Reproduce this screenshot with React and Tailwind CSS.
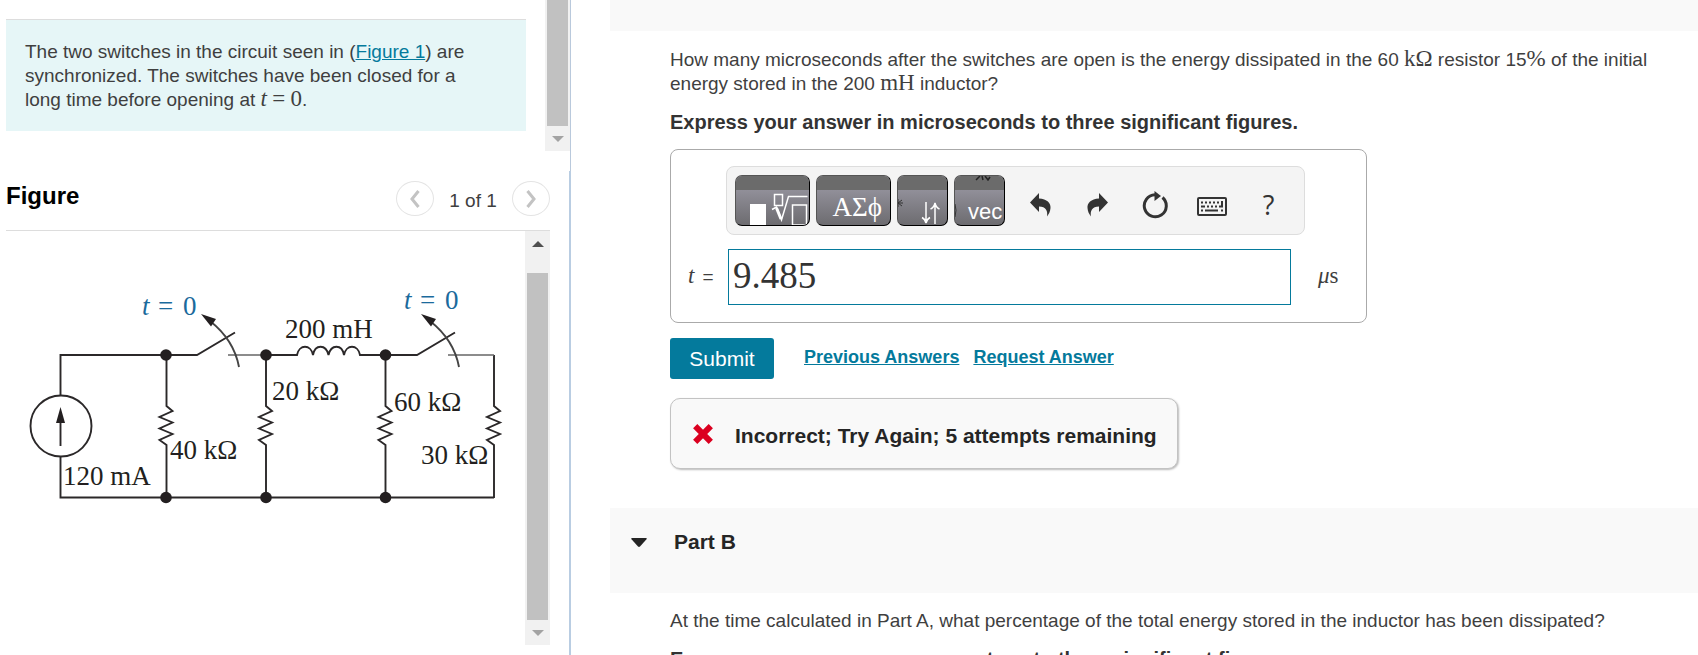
import { useState } from 'react';
import clsx from 'clsx';

// Inline math set in a serif face
const Formula = ({ children, italic = false }) => (
  <span className={clsx("font-['Liberation_Serif',serif] text-[23px] leading-4", italic && 'italic')}>
    {children}
  </span>
);

const Arrow = ({ up = false, dim = false }) => (
  <svg width="12" height="6" viewBox="0 0 12 6" fill={dim ? '#a3a3a3' : '#505050'}>
    <path d={up ? 'M0 6L6 0l6 6z' : 'M0 0h12L6 6z'} />
  </svg>
);

const PagerButton = ({ label, d }) => (
  <button
    aria-label={label}
    className="flex h-[35px] w-[38px] items-center justify-center rounded-[50%] border border-[#e4e4e4]"
  >
    <svg width="12" height="18" viewBox="0 0 12 18" fill="none" stroke="#c3c3c3" strokeWidth="3">
      <path d={d} />
    </svg>
  </button>
);

// Vertical branch with the zigzag between y=406 and y=445
const Resistor = ({ x }) => (
  <path d={`M${x} 355V406l6 5-13 6 13 5.500-13 6 13 5.500-13 6 7 5V498`} />
);

const Switch = ({ x, end }) => (
  <g>
    <path d={`M${x - 31} 355H${x}L${x + 38} 332.500`} />
    <path d={`M${x + 31} 355H${end}`} stroke="#666" strokeWidth="1.500" />
    <path d={`M${x + 42} 367Q${x + 37} 340 ${x + 13} 321`} stroke="#444" />
    <path d={`M${x + 4} 314l15 5-5 7.500z`} fill="#231f20" stroke="none" />
  </g>
);

const SwitchTime = ({ x, y }) => (
  <text y={y}>
    <tspan x={x} fontStyle="italic">t</tspan>
    <tspan x={x + 16}>=</tspan>
    <tspan x={x + 41}>0</tspan>
  </text>
);

const labels = [
  { x: 285, y: 338, text: '200 mH' },
  { x: 272, y: 400, text: '20 kΩ' },
  { x: 394, y: 411, text: '60 kΩ' },
  { x: 170, y: 459, text: '40 kΩ' },
  { x: 421, y: 464, text: '30 kΩ' },
  { x: 63, y: 485, text: '120 mA' }
];

const Circuit = () => (
  <svg
    width="519"
    height="300"
    viewBox="6 231 519 300"
    className="shrink-0 font-['Liberation_Serif',serif] text-[27px]"
    role="img"
    aria-label="Circuit"
  >
    <g fill="none" stroke="#2b2829" strokeWidth="1.900" strokeLinejoin="miter">
      <path d="M166 355H60.500V395.500M60.500 456.500V497.500H494" />
      <circle cx="61" cy="426" r="30.500" />
      <path d="M60.500 446V420" />
      <path d="M60.500 407l-4.500 16h9z" fill="#231f20" stroke="none" />
      <Resistor x={166.5} />
      <Resistor x={266} />
      <Resistor x={385.5} />
      <Resistor x={494} />
      <Switch x={197} end={266} />
      <Switch x={417} end={494} />
      <path d="M266 355H297C299 344 311 344 313 355C315 344 326 344 328.500 355C331 344 342 344 344 355C346 344 358 344 360 355H386" />
    </g>
    <g fill="#231f20">
      {[166, 266, 385.5].map((x) => (
        <g key={x}>
          <circle cx={x} cy="355" r="5.800" />
          <circle cx={x} cy="497.500" r="5.800" />
        </g>
      ))}
      {labels.map((l) => (
        <text key={l.text} x={l.x} y={l.y}>{l.text}</text>
      ))}
    </g>
    <g fill="#1b6a9c">
      <SwitchTime x={142} y={315} />
      <SwitchTime x={404} y={309} />
    </g>
  </svg>
);

const Problem = () => (
  <section className="flex h-[171px] border-r border-[#b9c9dc] pl-1.5">
    <div className="flex-1 pt-[19px]">
      <div className="mr-[19px] h-28 border-t border-[#ddd] bg-[#e6f6f7] pl-[19px] pr-10 pt-5">
        <p>
          The two switches in the circuit seen in (
          <a href="#figure" className="text-[#047a9c] underline">Figure 1</a>) are
          synchronized. The switches have been closed for a long time before opening at{' '}
          <Formula italic>t</Formula> <Formula>=</Formula> <Formula>0</Formula>.
        </p>
      </div>
    </div>
    <div className="flex h-[151px] w-[25px] flex-col items-center bg-[#f1f1f1]">
      <div className="w-[21px] flex-1 bg-[#c1c1c1]" />
      <div className="flex h-[25px] items-center"><Arrow dim /></div>
    </div>
  </section>
);

const Figure = () => (
  <section id="figure" className="flex flex-1 flex-col border-r-2 border-[#b9cde2] pl-1.5 pr-[19px]">
    <header className="flex h-[60px] shrink-0 items-center justify-between border-b border-[#ddd]">
      <h2 className="pb-2.5 text-[24px] font-bold text-black">Figure</h2>
      <div className="flex items-center pb-1">
        <PagerButton label="Previous" d="M9.500 1L3 9l6.500 8" />
        <span className="w-[78px] pt-1 text-center">1 of 1</span>
        <PagerButton label="Next" d="M2.500 1L9 9l-6.500 8" />
      </div>
    </header>
    <div className="mb-2.5 flex flex-1">
      <div className="flex-1"><Circuit /></div>
      <div className="flex w-[25px] flex-col items-center bg-[#f1f1f1]">
        <div className="flex h-[42px] items-start pt-2.5"><Arrow up /></div>
        <div className="w-[21px] flex-1 bg-[#c1c1c1]" />
        <div className="flex h-[25px] items-center"><Arrow dim /></div>
      </div>
    </div>
  </section>
);

const PaletteButton = ({ label, wide = false, children }) => (
  <button
    aria-label={label}
    className={clsx(
      'relative h-[51px] overflow-hidden rounded-[7px] border border-b-black border-l-[#555] border-r-black border-t-[#555] bg-linear-to-b from-[#a09eaa] to-[#6d6c70] text-white',
      wide ? 'w-[75px]' : 'w-[51px]'
    )}
  >
    <span className="absolute inset-x-0 top-0 h-3.5 bg-[#6b6b6b]" />
    {children}
  </button>
);

const IconButton = ({ label, children }) => (
  <button aria-label={label} className="flex w-[57px] items-center justify-center text-[#333]">
    {children}
  </button>
);

const Toolbar = () => (
  <div className="flex h-[69px] items-center rounded-lg border border-[#ddd] bg-[#f4f4f4] pl-2">
    <div className="flex gap-1.5">
      <PaletteButton label="Templates" wide>
        <svg className="absolute left-3.5 top-4" width="60" height="35" viewBox="0 0 60 35" fill="none" stroke="#fff">
          <path d="M0 12h16v21H0z" fill="#fff" stroke="none" />
          <path d="M24.500 2.500h8v11h-8z" strokeWidth="1.500" />
          <path d="M22 17.500l4.500-2.500 5 13 7-23.500h19" strokeWidth="1.500" />
          <path d="M26.500 16l4.500 11" strokeWidth="3" />
          <path d="M42.500 13h14v20h-14z" strokeWidth="1.500" />
        </svg>
      </PaletteButton>
      <PaletteButton label="Symbols" wide>
        <span className="absolute bottom-0.5 right-2 font-['Liberation_Serif',serif] text-[27px] leading-8">ΑΣϕ</span>
      </PaletteButton>
      <PaletteButton label="Scripts">
        <svg className="absolute left-0 top-[22px]" width="5" height="10" viewBox="0 0 5 10" fill="none" stroke="#333">
          <path d="M0 1v8M0 5l4-3M0 5l4 3M0 5h5" />
        </svg>
        <svg className="absolute left-[23px] top-[26px]" width="20" height="23" viewBox="0 0 20 23" fill="none" stroke="#fff" strokeWidth="1.500">
          <path d="M5 0v21M1 15.500q3 1.500 4 5.500 1-4 4-5.500M14 22V1M9.500 7q3.500-1.500 4.500-6 1 4.500 4.500 6" />
        </svg>
      </PaletteButton>
      <PaletteButton label="Vectors">
        <svg className="absolute left-5 top-0" width="16" height="5" viewBox="0 0 16 5" fill="none" stroke="#222" strokeWidth="1.500">
          <path d="M1 4l4-4M7 0l1 4M10 0l3 4 2-3" />
        </svg>
        <svg className="absolute left-0 top-7" width="3" height="13" viewBox="0 0 3 13" fill="none" stroke="#333">
          <path d="M0 0q2 6 0 13" />
        </svg>
        <span className="absolute left-[13px] top-6 text-[22px] leading-6">vec</span>
      </PaletteButton>
    </div>
    <div className="flex pl-[7px] pt-2">
      <IconButton label="Undo">
        <svg width="21" height="24" viewBox="0 0 21 24" fill="currentColor">
          <path d="M9 0v5.500C17 6 21 10 20.500 15c-.3 3.500-1.500 6-3.500 8.500C18 18 16 13.500 9 13.500V19L0 9.500z" />
        </svg>
      </IconButton>
      <IconButton label="Redo">
        <svg width="21" height="24" viewBox="0 0 21 24" fill="currentColor">
          <path d="M12 0v5.500C4 6 0 10 .5 15c.3 3.500 1.500 6 3.500 8.500C3 18 5 13.500 12 13.500V19L21 9.500z" />
        </svg>
      </IconButton>
      <IconButton label="Reset">
        <svg width="26" height="28" viewBox="0 0 26 28" fill="none">
          <path d="M20.500 6.500A11 11 0 1 1 13 3.800" stroke="currentColor" strokeWidth="3" />
          <path d="M12.500 0l6.500 5-6.500 5z" fill="currentColor" />
        </svg>
      </IconButton>
      <IconButton label="Keyboard">
        <svg width="30" height="19" viewBox="0 0 30 19" className="mt-1" fill="none" stroke="currentColor">
          <rect x="1" y="1" width="28" height="17" rx="1" strokeWidth="2" />
          <path d="M4 5.500h18" strokeWidth="2" strokeDasharray="2 2" />
          <path d="M4 9.500h4M10 9.500h2M14 9.500h2M18 9.500h2M22 9.500h4M25 4v6.500M4 13.500h2M8 13.500h13M24 13.500h2" strokeWidth="2" />
        </svg>
      </IconButton>
      <button aria-label="Help" className="w-[57px] text-center font-['Open_Sans',sans-serif] text-[27px] leading-none text-[#333]">?</button>
    </div>
  </div>
);

const AnswerBox = () => {
  const [value, setValue] = useState('9.485');

  return (
    <div className="mt-[15px] flex h-[174px] w-[697px] flex-col rounded-lg border border-[#aaa] pl-[17px] pt-4">
      <div className="ml-[38px] w-[579px]"><Toolbar /></div>
      <div className="mt-3.5 flex items-center">
        <label htmlFor="answer" className="flex w-[40px] items-baseline gap-2">
          <Formula italic>t</Formula>=
        </label>
        <input
          id="answer"
          value={value}
          onChange={(e) => setValue(e.target.value)}
          className="h-[56px] w-[563px] border border-[#047a9c] pb-1 pl-1 font-['Liberation_Serif',serif] text-[37px] text-[#333] outline-none"
        />
        <span className="pl-[27px]"><Formula italic>μ</Formula><Formula>s</Formula></span>
      </div>
    </div>
  );
};

const PartA = () => (
  <section className="pl-[60px] pr-4 pt-[17px]">
    <p>
      How many microseconds after the switches are open is the energy dissipated in the 60{' '}
      <Formula>kΩ</Formula> resistor 15<Formula>%</Formula> of the initial energy stored in the 200{' '}
      <Formula>mH</Formula> inductor?
    </p>
    <p className="mt-3.5 text-[20px] font-bold text-[#333]">
      Express your answer in microseconds to three significant figures.
    </p>
    <AnswerBox />
    <div className="mt-[15px] flex items-center">
      <button className="h-[41px] w-[104px] rounded-[3px] bg-[#047a9c] text-[21px] text-white">Submit</button>
      <div className="flex gap-3.5 pb-1 pl-[30px] text-[18px] font-bold text-[#047a9c]">
        <a href="#previous" className="underline">Previous Answers</a>
        <a href="#request" className="underline">Request Answer</a>
      </div>
    </div>
    <div
      role="alert"
      className="mt-[19px] flex h-[71px] w-[508px] items-center rounded-[10px] border border-[#c3c3c3] bg-[#f9f9f9] pl-[22px] shadow-[1px_1px_2px_#bbb]"
    >
      <svg width="20" height="20" viewBox="0 0 20 20" fill="none" stroke="#db0020" strokeWidth="6">
        <path d="M2.200 2.200l15.600 15.600M17.800 2.200L2.200 17.800" />
      </svg>
      <span className="pl-[22px] pt-1 text-[21px] font-bold text-[#252525]">Incorrect; Try Again; 5 attempts remaining</span>
    </div>
  </section>
);

const PartB = () => (
  <section className="mt-[39px]">
    <header className="h-[85px] bg-[#f9f9f9] pl-[21px] pt-[22px]">
      <button className="flex items-center gap-[27px] text-[21px] font-bold text-[#252525]">
        <svg width="16" height="9" viewBox="0 0 16 9" fill="currentColor">
          <path d="M1 0h14q1.500 0 .5 1.300L9 8.500q-1 .8-2 0L.5 1.300Q-.5 0 1 0z" />
        </svg>
        Part B
      </button>
    </header>
    <div className="pl-[60px] pr-4 pt-4">
      <p>
        At the time calculated in Part A, what percentage of the total energy stored in the inductor has been dissipated?
      </p>
      <p className="mt-3.5 text-[20px] font-bold text-[#333]">
        Express your answer as a percentage to three significant figures.
      </p>
    </div>
  </section>
);

export default function App() {
  return (
    <div className="flex h-screen overflow-hidden bg-white font-['Liberation_Sans',Arial,sans-serif] text-[19px] leading-6 text-[#3f3f3f]">
      <aside className="flex w-[571px] shrink-0 flex-col">
        <Problem />
        <Figure />
      </aside>
      <main className="flex-1 pl-[39px]">
        <div className="h-[31px] bg-[#f9f9f9]" />
        <PartA />
        <PartB />
      </main>
    </div>
  );
}
